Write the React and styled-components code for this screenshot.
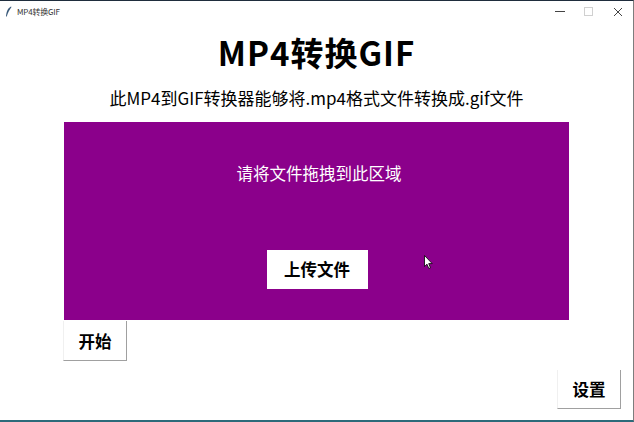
import React from "react";
import styled, { createGlobalStyle } from "styled-components";

const Global = createGlobalStyle`
  html, body { margin: 0; padding: 0; background: #ffffff; }
  * { box-sizing: border-box; }
  body { font-family: "Noto Sans CJK SC", "Noto Sans", sans-serif; }
`;

const Window = styled.div`
  position: relative;
  width: 634px;
  height: 422px;
  background: #ffffff;
  border-top: 1px solid #1f2d3d;
  border-right: 1px solid #7d7d7d;
  border-bottom: 2px solid #2c6a7a;
  display: flex;
  flex-direction: column;
  overflow: hidden;
`;

const TitleBar = styled.div`
  height: 21px;
  display: flex;
  align-items: center;
  padding-left: 5px;
  font-size: 8px;
  color: #333;
`;

const TitleText = styled.span`
  margin-left: 5px;
  letter-spacing: -0.2px;
`;

const Controls = styled.div`
  margin-left: auto;
  margin-right: 1px;
  display: flex;
  align-items: center;
`;

const Ctrl = styled.div`
  width: 29px;
  height: 21px;
  display: flex;
  align-items: center;
  justify-content: center;
`;

const Heading = styled.h1`
  margin: 10px 0 0 0;
  text-align: center;
  font-size: 33px;
  font-weight: 700;
  line-height: 40px;
  letter-spacing: 1px;
  color: #000;
`;

const Subtitle = styled.p`
  margin: 15px 0 0 0;
  text-align: center;
  font-size: 17px;
  line-height: 22px;
  color: #000;
`;

const DropZone = styled.div`
  margin: 13px 0 0 64px;
  width: 505px;
  height: 198px;
  background: #8b008b;
  display: flex;
  flex-direction: column;
  align-items: center;
`;

const DropHint = styled.div`
  margin-top: 40px;
  padding-left: 5px;
  font-size: 16.5px;
  line-height: 22px;
  color: #ffffff;
`;

const TkButton = styled.button`
  font-family: inherit;
  font-weight: 700;
  font-size: 16.5px;
  color: #000;
  background: #ffffff;
  border: none;
  border-right: 1px solid ${(p) => (p.$flat ? "#ffffff" : "#a0a0a0")};
  border-bottom: 1px solid ${(p) => (p.$flat ? "#ffffff" : "#a0a0a0")};
  border-left: 1px solid ${(p) => (p.$flat ? "#ffffff" : "#f0f0f0")};
  width: ${(p) => p.$w}px;
  height: ${(p) => p.$h}px;
  padding: 0;
  display: flex;
  align-items: center;
  justify-content: center;
  cursor: default;
`;

const UploadWrap = styled.div`
  margin-top: 66px;
  margin-left: 1px;
`;

const StartRow = styled.div`
  margin: 1px 0 0 63px;
`;

const SettingsRow = styled.div`
  margin-top: 9px;
  display: flex;
  justify-content: flex-end;
  padding-right: 12px;
`;

const Cursor = styled.svg`
  position: absolute;
  left: 424px;
  top: 254px;
`;

export default function App() {
  return (
    <>
      <Global />
      <Window>
        <TitleBar>
          <svg width="7" height="11" viewBox="0 0 7 11">
            <path d="M6 0.5 C3 2 1.5 5 1 10.5 L1.8 10.5 C2.6 7 4.5 4 6.5 1 Z" fill="#3a5a7a" />
          </svg>
          <TitleText>MP4转换GIF</TitleText>
          <Controls>
            <Ctrl>
              <svg width="10" height="2"><rect x="0" y="0" width="10" height="1" fill="#444" /></svg>
            </Ctrl>
            <Ctrl>
              <svg width="10" height="10"><rect x="0.5" y="0.5" width="8" height="8" fill="none" stroke="#d0d0d0" /></svg>
            </Ctrl>
            <Ctrl>
              <svg width="10" height="10"><path d="M1 1 L9 9 M9 1 L1 9" stroke="#444" strokeWidth="1" /></svg>
            </Ctrl>
          </Controls>
        </TitleBar>
        <Heading>MP4转换GIF</Heading>
        <Subtitle>此MP4到GIF转换器能够将.mp4格式文件转换成.gif文件</Subtitle>
        <DropZone>
          <DropHint>请将文件拖拽到此区域</DropHint>
          <UploadWrap>
            <TkButton $flat $w={101} $h={39}>上传文件</TkButton>
          </UploadWrap>
        </DropZone>
        <StartRow>
          <TkButton $w={64} $h={40}>开始</TkButton>
        </StartRow>
        <SettingsRow>
          <TkButton $w={64} $h={39}>设置</TkButton>
        </SettingsRow>
        <Cursor width="10" height="15" viewBox="0 0 10 15">
          <path d="M0.5 0.5 L0.5 11.5 L3 9.2 L4.8 13.5 L6.5 12.8 L4.7 8.6 L8.2 8.6 Z" fill="#ffffff" stroke="#000" strokeWidth="0.8" />
        </Cursor>
      </Window>
    </>
  );
}
